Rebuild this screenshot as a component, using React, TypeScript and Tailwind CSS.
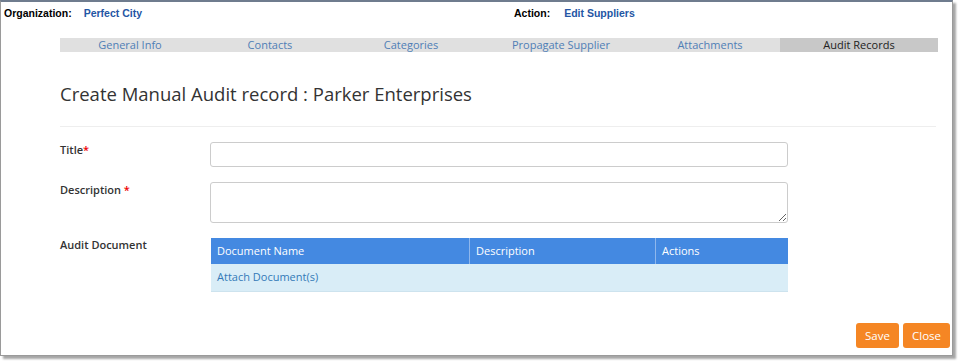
import React from "react";

const TABS = [
  { name: "General Info", w: "w-[140px]" },
  { name: "Contacts", w: "w-[140px]" },
  { name: "Categories", w: "w-[142px]" },
  { name: "Propagate Supplier", w: "w-[158px]" },
  { name: "Attachments", w: "w-[140px]" },
  { name: "Audit Records", w: "w-[158px]", active: true },
];

export default function App() {
  return (
    <div className="w-[960px] h-[362px] bg-white font-['Open_Sans',sans-serif]">
      <div className="w-[953px] h-[356px] bg-white border border-[#9a9a9a] border-t-2 border-t-[#6f7c8e] shadow-[3px_3px_2px_rgba(0,0,0,0.35)] relative">
        {/* header */}
        <div className="flex items-center h-[22px] pt-[1px] text-[10.5px] font-bold font-['Liberation_Sans',Arial,sans-serif]">
          <span className="ml-[3px] text-black">Organization:</span>
          <span className="ml-[12px] text-[#2456a4]">Perfect City</span>
          <span className="ml-[372px] text-black">Action:</span>
          <span className="ml-[14px] text-[#2456a4]">Edit Suppliers</span>
        </div>

        {/* tabs */}
        <div className="flex ml-[59px] mt-[14px] h-[14px] w-[878px] bg-[#e0e0e0] text-[11px] leading-[14px]">
          {TABS.map((t) => (
            <div
              key={t.name}
              className={`${t.w} text-center ${t.active ? "bg-[#c8c8c8] text-[#222]" : "text-[#4f7eb6]"}`}
            >
              {t.name}
            </div>
          ))}
        </div>

        {/* title */}
        <h1 className="ml-[59px] mt-[30px] text-[18.5px] leading-[24px] text-[#333]">
          Create Manual Audit record : Parker Enterprises
        </h1>
        <div className="ml-[59px] mr-[16px] mt-[20px] border-t border-[#eeeeee]" />

        {/* form */}
        <div className="ml-[59px] mt-[15px] text-[11px] text-[#333]">
          <div className="flex">
            <label className="w-[150px] font-semibold">
              Title<span className="text-[#e00]">*</span>
            </label>
            <input className="w-[578px] h-[25px] border border-[#cccccc] rounded-[3px]" />
          </div>
          <div className="flex mt-[15px]">
            <label className="w-[150px] font-semibold">
              Description <span className="text-[#e00]">*</span>
            </label>
            <textarea className="w-[578px] h-[41px] border border-[#cccccc] rounded-[3px] resize-y" />
          </div>
          <div className="flex mt-[15px]">
            <label className="w-[151px] font-semibold -mt-[1px]">Audit Document</label>
            <div className="w-[577px]">
              <div className="flex h-[26px] bg-[#4489e1] text-white items-center">
                <div className="w-[259px] pl-[6px] h-full flex items-center border-r border-[#8fb7ec]">Document Name</div>
                <div className="w-[186px] pl-[6px] h-full flex items-center border-r border-[#8fb7ec]">Description</div>
                <div className="flex-1 pl-[6px]">Actions</div>
              </div>
              <div className="h-[28px] bg-[#d9edf7] flex items-center pl-[6px] text-[#337ab7] border-b border-[#cde3ee]">
                Attach Document(s)
              </div>
            </div>
          </div>
        </div>

        {/* buttons */}
        <div className="absolute right-[2px] bottom-[7px] flex gap-[4px] text-[11.5px] text-white">
          <button className="w-[43px] h-[25px] bg-[#f58624] rounded-[3px]">Save</button>
          <button className="w-[47px] h-[25px] bg-[#f58624] rounded-[3px]">Close</button>
        </div>
      </div>
    </div>
  );
}
